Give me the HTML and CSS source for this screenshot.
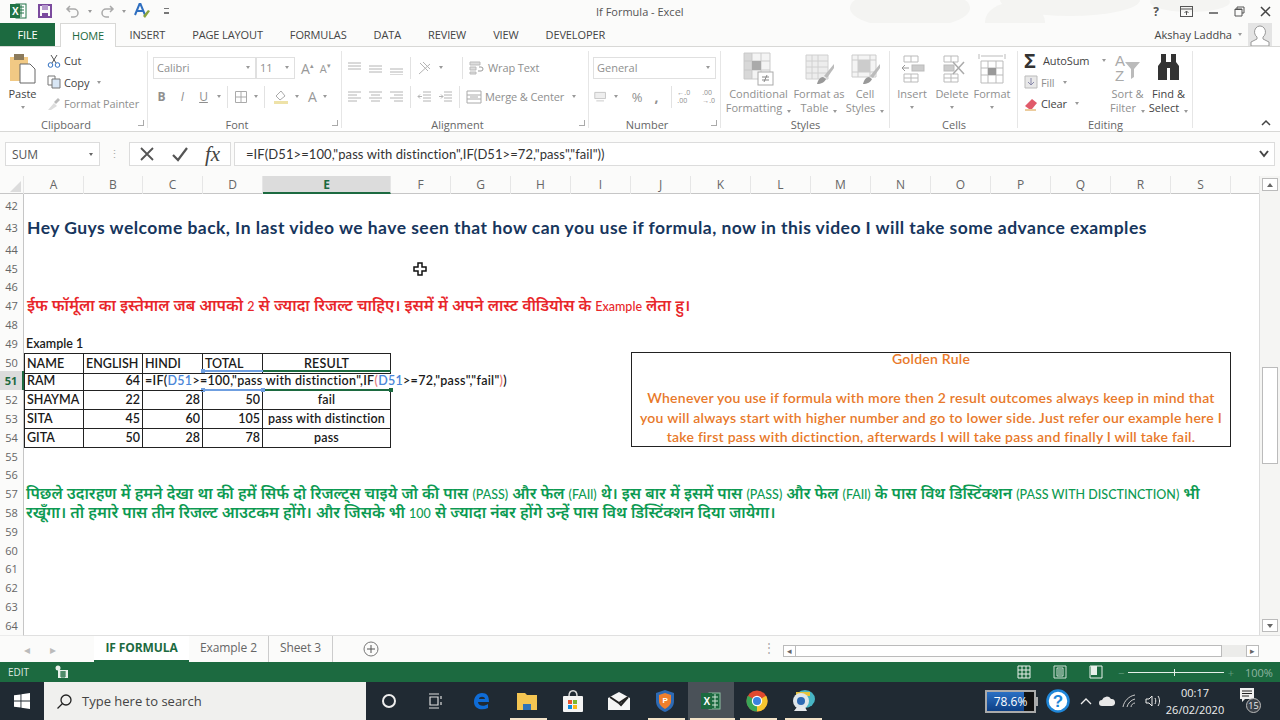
FILE: index.html
```html
<!DOCTYPE html>
<html lang="en">
<head>
  <meta charset="UTF-8" />
  <title>If Formula - Excel</title>
  <link rel="stylesheet" href="styles.css">
</head>
<body>
  <div class="titlebar">
    <svg class="clouds" width="480" height="46" viewBox="0 0 480 46"><g fill="#f4f4f2"><ellipse cx="110" cy="8" rx="60" ry="20"/><ellipse cx="215" cy="22" rx="30" ry="20"/><ellipse cx="270" cy="0" rx="70" ry="16"/><ellipse cx="370" cy="38" rx="70" ry="10"/><ellipse cx="390" cy="2" rx="40" ry="10"/></g></svg>
    <div class="qat">
      <svg width="18" height="18" viewBox="0 0 18 18"><rect x="7" y="2" width="10" height="14" fill="#fff" stroke="#217346"/><path d="M10 5h5M10 8h5M10 11h5M12 3v12" stroke="#217346"/><rect x="1" y="2" width="10" height="14" fill="#217346"/><text x="3" y="13" class="xmark">X</text></svg>
      <svg width="16" height="16" viewBox="0 0 16 16"><path d="M2 2h12v12H2z" fill="none" stroke="#7b4a9e" stroke-width="2"/><rect x="5" y="2" width="6" height="5" fill="#b79bce"/><rect x="5" y="10" width="6" height="4" fill="#7b4a9e"/></svg>
      <svg width="16" height="14" viewBox="0 0 16 14"><path d="M5 2 2 5l3 3M2 5h7a4 4 0 0 1 0 8H6" fill="none" stroke="#aaa" stroke-width="1.5"/></svg>
      <span class="caret"></span>
      <svg width="16" height="14" viewBox="0 0 16 14"><path d="m11 2 3 3-3 3M14 5H7a4 4 0 0 0 0 8h3" fill="none" stroke="#aaa" stroke-width="1.5"/></svg>
      <span class="caret"></span>
      <svg width="18" height="18" viewBox="0 0 18 18"><path d="M2 13 6.500 2h1L12 13M4 9h6" fill="none" stroke="#2f6fc0" stroke-width="2"/><path d="m10 14 5-6 2 1-5 7z" fill="#8aa33c"/></svg>
      <span class="qat-more"></span>
    </div>
    <div class="doc-title">If Formula - Excel</div>
    <div class="win-btns">
      <span class="win-help">?</span>
      <svg width="13" height="11" viewBox="0 0 13 11"><rect x=".5" y=".5" width="12" height="10" fill="none" stroke="#555"/><path d="M.5 3h12M6.500 9V5M4.500 7l2-2 2 2" fill="none" stroke="#555"/></svg>
      <svg width="11" height="11" viewBox="0 0 11 11"><path d="M1 7h9" stroke="#555" stroke-width="1.500"/></svg>
      <svg width="11" height="11" viewBox="0 0 11 11"><path d="M3 3V1h7v6H8M1 3h7v7H1z" fill="none" stroke="#555"/><path d="M1 3.500h7" stroke="#555"/></svg>
      <svg width="11" height="11" viewBox="0 0 11 11"><path d="m1 1 9 9M10 1l-9 9" stroke="#444" stroke-width="1.500"/></svg>
    </div>
  </div>

  <div class="tabsbar">
    <div class="tab file">FILE</div>
    <div class="tab active">HOME</div>
    <div class="tab">INSERT</div>
    <div class="tab">PAGE LAYOUT</div>
    <div class="tab">FORMULAS</div>
    <div class="tab">DATA</div>
    <div class="tab">REVIEW</div>
    <div class="tab">VIEW</div>
    <div class="tab">DEVELOPER</div>
    <div class="user">
      <span>Akshay Laddha</span><span class="caret"></span>
      <svg width="24" height="23" viewBox="0 0 24 23"><rect width="24" height="23" fill="#e4e4e4"/><path d="M3 23v-4l6-3v-2a5.500 6 0 1 1 6 0v2l6 3v4z" fill="#fff" stroke="#999"/></svg>
    </div>
  </div>

  <div class="ribbon">
    <div class="grp g-clip">
      <div class="grp-body">
        <div class="paste">
          <svg width="27" height="30" viewBox="0 0 27 30"><rect x="1" y="3" width="18" height="24" fill="#f1c984"/><rect x="5" y="0" width="10" height="6" fill="#8b7a5c"/><path d="M11 10h10l5 5v14H11z" fill="#fff" stroke="#666"/></svg>
          <span>Paste</span><span class="caret"></span>
        </div>
        <div class="clip-list">
          <div class="rbtn dark"><svg width="14" height="14" viewBox="0 0 14 14"><path d="m4 1 5 8M10 1 5 9" stroke="#555" fill="none"/><circle cx="3.500" cy="11" r="2.300" fill="none" stroke="#2f6fc0"/><circle cx="10.500" cy="11" r="2.300" fill="none" stroke="#2f6fc0"/></svg>Cut</div>
          <div class="rbtn dark"><svg width="14" height="14" viewBox="0 0 14 14"><path d="M1 1h7v9H1z" fill="#fff" stroke="#777"/><path d="M5 4h8v9H5z" fill="#d8e6f5" stroke="#777"/></svg>Copy<span class="caret gap"></span></div>
          <div class="rbtn"><svg width="14" height="14" viewBox="0 0 14 14"><path d="m1 13 6-7 3 3-6 4z" fill="#ddd"/><path d="m7 5 4-4 2 2-4 4z" fill="#bbb"/></svg>Format Painter</div>
        </div>
      </div>
      <div class="grp-label lbl-launch">Clipboard<i class="launch"></i></div>
    </div>

    <div class="grp g-font">
      <div class="grp-body stack">
        <div class="line">
          <div class="combo font-box">Calibri<span class="caret"></span></div>
          <div class="combo size-box">11<span class="caret"></span></div>
          <span class="glyph big">A<sup>▴</sup></span>
          <span class="glyph small">A<sup>▾</sup></span>
        </div>
        <div class="line fmt">
          <b>B</b><em>I</em><u>U</u><span class="caret"></span>
          <i class="sep"></i>
          <svg width="14" height="14" viewBox="0 0 14 14"><path d="M1.500 1.500h11v11h-11zM7 1.500v11M1.500 7h11" fill="none" stroke="#aaa"/></svg><span class="caret"></span>
          <i class="sep"></i>
          <svg class="fill-ic" width="16" height="15" viewBox="0 0 16 15"><path d="m3 7 5-5 4 5-5 4z" fill="none" stroke="#aaa"/><rect x="1" y="12" width="14" height="3" fill="#eee2a8"/></svg><span class="caret"></span>
          <span class="glyph a-ic">A</span><span class="caret"></span>
        </div>
      </div>
      <div class="grp-label lbl-launch">Font<i class="launch"></i></div>
    </div>

    <div class="grp g-align">
      <div class="grp-body stack">
        <div class="line">
          <svg class="al" width="15" height="14" viewBox="0 0 15 14"><path d="M1 2h13M1 5h13M1 8h13" stroke="#b4b4b4"/></svg>
          <svg class="al" width="15" height="14" viewBox="0 0 15 14"><path d="M1 5h13M1 8h13M1 11h13" stroke="#b4b4b4"/></svg>
          <svg class="al" width="15" height="14" viewBox="0 0 15 14"><path d="M1 8h13M1 11h13M1 14h13" stroke="#b4b4b4"/></svg>
          <i class="sep"></i>
          <svg width="16" height="14" viewBox="0 0 16 14"><path d="m3 2 8 8M6 1l7 7M2 13 13 3" stroke="#b4b4b4" fill="none"/></svg><span class="caret"></span>
          <i class="sep wide"></i>
          <div class="rbtn"><svg width="16" height="14" viewBox="0 0 16 14"><path d="M1 1h10v3H1zM1 6h6v3H1zM1 11h6v2H1z" fill="#ddd" stroke="#bbb"/><path d="M9 10h3a2 2 0 0 0 0-4h-2" fill="none" stroke="#999"/></svg>Wrap Text</div>
        </div>
        <div class="line">
          <svg class="al" width="15" height="14" viewBox="0 0 15 14"><path d="M1 2h13M1 5h9M1 8h13M1 11h9" stroke="#b4b4b4"/></svg>
          <svg class="al" width="15" height="14" viewBox="0 0 15 14"><path d="M1 2h13M3 5h9M1 8h13M3 11h9" stroke="#b4b4b4"/></svg>
          <svg class="al" width="15" height="14" viewBox="0 0 15 14"><path d="M1 2h13M5 5h9M1 8h13M5 11h9" stroke="#b4b4b4"/></svg>
          <i class="sep"></i>
          <svg width="15" height="14" viewBox="0 0 15 14"><path d="M6 2h8M6 5h8M6 8h8M6 11h8M1 6.500h4M3 4.500l-2 2 2 2" stroke="#b4b4b4" fill="none"/></svg>
          <svg width="15" height="14" viewBox="0 0 15 14"><path d="M6 2h8M6 5h8M6 8h8M6 11h8M1 6.500h4M3 4.500l2 2-2 2" stroke="#b4b4b4" fill="none"/></svg>
          <i class="sep"></i>
          <div class="rbtn"><svg width="16" height="14" viewBox="0 0 16 14"><path d="M1 1h14v12H1zM1 5h14M1 9h14M4 7h8" fill="none" stroke="#aaa"/></svg>Merge &amp; Center<span class="caret gap"></span></div>
        </div>
      </div>
      <div class="grp-label lbl-launch">Alignment<i class="launch"></i></div>
    </div>

    <div class="grp g-num">
      <div class="grp-body stack">
        <div class="line"><div class="combo num-box">General<span class="caret"></span></div></div>
        <div class="line numfmt">
          <svg width="18" height="14" viewBox="0 0 18 14"><path d="M1 1h14v8H1z" fill="#eee" stroke="#bbb"/><path d="M3 11h10v2H3z" fill="#ddd"/></svg><span class="caret"></span>
          <span class="pct">%</span><span class="comma">,</span>
          <i class="sep"></i>
          <span class="dec">←.0<br>.00</span><span class="dec">.00<br>→.0</span>
        </div>
      </div>
      <div class="grp-label lbl-launch">Number<i class="launch"></i></div>
    </div>

    <div class="grp g-styles">
      <div class="grp-body bigs">
        <div class="big-btn w1">
          <svg width="32" height="34" viewBox="0 0 32 34"><path d="M1 1h26v26H1zM1 9h26M1 18h26M9 1v26M18 1v26" fill="#f4f4f4" stroke="#ccc"/><path d="M9 9h9v9H9z" fill="#aaa"/><path d="M1 1h8v26H1z" fill="#c4c4c4" opacity=".6"/><rect x="15" y="20" width="15" height="13" fill="#fff" stroke="#aaa"/><path d="M19 25h7M19 28h7M24 23l-3 7" stroke="#888"/></svg>
          <span>Conditional</span><span>Formatting<span class="caret gap"></span></span>
        </div>
        <div class="big-btn w2">
          <svg width="32" height="34" viewBox="0 0 32 34"><path d="M3 3h22v24H3zM3 9h22M3 15h22M3 21h22M9 3v24M15 3v24" fill="#ededed" stroke="#d0d0d0"/><path d="m31 12-10 12 3 2 7-10z" fill="#bbb"/><path d="M20 25c-3 0-5 3-6 7 4 0 8-2 9-5z" fill="#999"/></svg>
          <span>Format as</span><span>Table<span class="caret gap"></span></span>
        </div>
        <div class="big-btn w3">
          <svg width="32" height="34" viewBox="0 0 32 34"><path d="M3 3h24v22H3zM3 8h24M9 3v22M21 3v22M3 20h24" fill="#f4f4f4" stroke="#ccc"/><path d="M9 8h12v12H9z" fill="#ccc"/><path d="m31 12-10 12 3 2 7-10z" fill="#bbb"/><path d="M20 25c-3 0-5 3-6 7 4 0 8-2 9-5z" fill="#999"/></svg>
          <span>Cell</span><span>Styles<span class="caret gap"></span></span>
        </div>
      </div>
      <div class="grp-label">Styles</div>
    </div>

    <div class="grp g-cells">
      <div class="grp-body bigs">
        <div class="big-btn w4">
          <svg width="28" height="34" viewBox="0 0 28 34"><path d="M6 4h14v6H6zM6 22h14v8H6zM13 4v6M13 22v8M6 26h14" fill="none" stroke="#bbb"/><rect x="14" y="13" width="12" height="6" fill="#ccc" stroke="#bbb"/><path d="M4 16h7M7 13l-3 3 3 3" fill="none" stroke="#999"/></svg>
          <span>Insert</span><span class="caret"></span>
        </div>
        <div class="big-btn w4">
          <svg width="28" height="34" viewBox="0 0 28 34"><path d="M6 4h14v6H6zM6 22h14v8H6zM13 4v6M13 22v8M6 26h14" fill="none" stroke="#bbb"/><rect x="6" y="13" width="10" height="6" fill="#ccc" stroke="#bbb"/><path d="m15 10 11 12M26 10 15 22" stroke="#aaa" stroke-width="1.500"/></svg>
          <span>Delete</span><span class="caret"></span>
        </div>
        <div class="big-btn w4">
          <svg width="28" height="34" viewBox="0 0 28 34"><path d="M1 2v5M27 2v5M3 4h22M3 9h22v22H3zM3 16h22M3 23h22M10 9v22M18 9v22" fill="none" stroke="#bbb"/><rect x="10" y="16" width="8" height="7" fill="#999"/></svg>
          <span>Format</span><span class="caret"></span>
        </div>
      </div>
      <div class="grp-label">Cells</div>
    </div>

    <div class="grp g-edit">
      <div class="grp-body">
        <div class="clip-list edit-list">
          <div class="rbtn dark"><span class="sigma">Σ</span>AutoSum<span class="caret gap2"></span></div>
          <div class="rbtn"><svg width="14" height="14" viewBox="0 0 14 14"><path d="M1 1h12v12H1z" fill="#e8e8e8" stroke="#bbb"/><path d="M7 3v7M4 7l3 3 3-3" fill="none" stroke="#88a"/></svg>Fill<span class="caret gap"></span></div>
          <div class="rbtn dark"><svg width="14" height="14" viewBox="0 0 14 14"><path d="m1 9 7-7 5 4-5 6H5z" fill="#e05a6a"/><path d="M1 13h11" stroke="#d99a3c"/></svg>Clear<span class="caret gap"></span></div>
        </div>
        <div class="big-btn w5">
          <svg width="32" height="34" viewBox="0 0 32 34"><text x="3" y="14" class="sort-l">A</text><text x="3" y="29" class="sort-l">Z</text><path d="M13 10h15l-6 7v8l-3 2V17z" fill="#bbb"/></svg>
          <span>Sort &amp;</span><span>Filter<span class="caret gap"></span></span>
        </div>
        <div class="big-btn w5 dark">
          <svg width="32" height="34" viewBox="0 0 32 34"><path d="M8 2h5v8h5V2h5v8l3 4v14h-9V16h-3v12H5V14l3-4z" fill="#333"/></svg>
          <span>Find &amp;</span><span>Select<span class="caret gap"></span></span>
        </div>
      </div>
      <div class="grp-label">Editing</div>
    </div>
    <svg class="collapse" width="10" height="7" viewBox="0 0 10 7"><path d="m1 6 4-4 4 4" fill="none" stroke="#444" stroke-width="1.500"/></svg>
  </div>

  <div class="formulabar">
    <div class="namebox">SUM<span class="caret dark-caret"></span></div>
    <span class="dots">⋮</span>
    <div class="fx-box">
      <svg width="16" height="16" viewBox="0 0 16 16"><path d="m2 2 12 12M14 2 2 14" stroke="#555" stroke-width="1.800"/></svg>
      <svg width="18" height="16" viewBox="0 0 18 16"><path d="m2 9 5 5L16 2" fill="none" stroke="#555" stroke-width="2.200"/></svg>
      <span class="fx">fx</span>
    </div>
    <div class="formula">=IF(D51&gt;=100,"pass with distinction",IF(D51&gt;=72,"pass","fail"))
      <svg width="10" height="8" viewBox="0 0 10 8"><path d="m1 1 4 5 4-5" fill="none" stroke="#444" stroke-width="2"/></svg>
    </div>
  </div>

  <div class="grid-wrap">
    <div class="sheet-area">
      <div class="col-heads">
        <div class="corner"><i></i></div>
        <div>A</div><div>B</div><div>C</div><div>D</div><div class="sel">E</div><div>F</div><div>G</div><div>H</div><div>I</div><div>J</div><div>K</div><div>L</div><div>M</div><div>N</div><div>O</div><div>P</div><div>Q</div><div>R</div><div>S</div><div></div>
      </div>
      <div class="sheet">
        <div class="row h42"><div class="num">42</div></div>
        <div class="row h43"><div class="num">43</div><div class="long hello">Hey Guys welcome back, In last video we have seen that how can you use if formula, now in this video I will take some advance examples</div></div>
        <div class="row"><div class="num">44</div></div>
        <div class="row"><div class="num">45</div></div>
        <div class="row"><div class="num">46</div></div>
        <div class="row"><div class="num">47</div><div class="long hindi red">ईफ फॉर्मूला का इस्तेमाल जब आपको <small>2</small> से ज्यादा रिजल्ट चाहिए। इसमें में अपने लास्ट वीडियोस के <small>Example</small> लेता हु।</div></div>
        <div class="row"><div class="num">48</div></div>
        <div class="row"><div class="num">49</div><div class="long ex">Example 1</div></div>
        <div class="row tbl first"><div class="num">50</div><div>NAME</div><div>ENGLISH</div><div>HINDI</div><div>TOTAL</div><div class="c">RESULT</div></div>
        <div class="row tbl"><div class="num on">51</div><div>RAM</div><div class="r">64</div><div class="editing">=IF(<span class="ref">D51</span>&gt;=100,"pass with distinction",IF<span class="paren">(</span><span class="ref">D51</span>&gt;=72,"pass","fail"<span class="paren">)</span>)</div><div class="ref-cell"></div><div class="cur-cell"></div></div>
        <div class="row tbl"><div class="num">52</div><div>SHAYMA</div><div class="r">22</div><div class="r">28</div><div class="r">50</div><div class="c">fail</div></div>
        <div class="row tbl"><div class="num">53</div><div>SITA</div><div class="r">45</div><div class="r">60</div><div class="r">105</div><div class="c">pass with distinction</div></div>
        <div class="row tbl"><div class="num">54</div><div>GITA</div><div class="r">50</div><div class="r">28</div><div class="r">78</div><div class="c">pass</div></div>
        <div class="row"><div class="num">55</div></div>
        <div class="row"><div class="num">56</div></div>
        <div class="row"><div class="num">57</div><div class="long hindi green">पिछले उदारहण में हमने देखा था की हमें सिर्फ दो रिजल्ट्स चाइये जो की पास <small>(PASS)</small> और फेल <small>(FAIl)</small> थे। इस बार में इसमें पास <small>(PASS)</small> और फेल <small>(FAIl)</small> के पास विथ डिस्टिंक्शन <small>(PASS WITH DISCTINCTION)</small> भी</div></div>
        <div class="row"><div class="num">58</div><div class="long hindi green">रखूँगा।  तो हमारे पास तीन रिजल्ट आउटकम होंगे। और जिसके भी <small>100</small> से ज्यादा नंबर होंगे उन्हें पास विथ डिस्टिंक्शन दिया जायेगा।</div></div>
        <div class="row"><div class="num">59</div></div>
        <div class="row"><div class="num">60</div></div>
        <div class="row"><div class="num">61</div></div>
        <div class="row"><div class="num">62</div></div>
        <div class="row"><div class="num">63</div></div>
        <div class="row"><div class="num">64</div></div>

        <div class="golden">
          <div class="golden-head">Golden Rule</div>
          <div>&nbsp;</div>
          <div>Whenever you use if formula with more then 2 result outcomes always keep in mind that</div>
          <div>you will always start with higher number and go to lower side. Just refer our example here I</div>
          <div>take first pass with dictinction, afterwards I will take pass and finally I will take fail.</div>
        </div>
        <svg class="cursor" width="14" height="14" viewBox="0 0 14 14"><path d="M5 1h4v4h4v4H9v4H5V9H1V5h4z" fill="#fff" stroke="#111" stroke-width="1.500"/></svg>
      </div>
    </div>
    <div class="vscroll">
      <div class="arrow-box"><svg width="8" height="6" viewBox="0 0 8 6"><path d="m4 1 3 4H1z" fill="#666"/></svg></div>
      <div class="vthumb"></div>
      <div class="arrow-box"><svg width="8" height="6" viewBox="0 0 8 6"><path d="m4 5 3-4H1z" fill="#666"/></svg></div>
    </div>
  </div>

  <div class="sheetbar">
    <div class="nav"><span>◂</span><span>▸</span></div>
    <div class="stab on">IF FORMULA</div>
    <div class="stab">Example 2</div>
    <div class="stab">Sheet 3</div>
    <svg class="add" width="16" height="16" viewBox="0 0 16 16"><circle cx="8" cy="8" r="7" fill="none" stroke="#777"/><path d="M8 4v8M4 8h8" stroke="#555"/></svg>
    <span class="dots hd">⋮</span>
    <div class="hscroll">
      <div class="harrow">◂</div>
      <div class="hthumb"></div>
      <div class="harrow end">▸</div>
    </div>
  </div>

  <div class="statusbar">
    <span class="mode">EDIT</span>
    <svg width="14" height="14" viewBox="0 0 14 14"><circle cx="3" cy="3" r="2.500" fill="#e8f0ea"/><path d="M3 5h10v8H3z" fill="#e8f0ea"/><path d="M5 7h6M5 9h6M5 11h6M7 6v7M9 6v7" stroke="#1c6a40"/></svg>
    <div class="views">
      <svg width="14" height="14" viewBox="0 0 14 14"><path d="M1 1h12v12H1zM5 1v12M9 1v12M1 5h12M1 9h12" fill="none" stroke="#e8f0ea"/></svg>
      <svg width="14" height="14" viewBox="0 0 14 14"><path d="M1 1h12v12H1zM4 3h6v8H4zM5 5h4M5 7h4M5 9h4" fill="none" stroke="#cfe0d6"/></svg>
      <svg width="14" height="14" viewBox="0 0 14 14"><path d="M1 1h12v12H1z" fill="none" stroke="#e8f0ea"/><path d="M2 1h6v9H2z" fill="#e8f0ea"/></svg>
    </div>
    <div class="zoomer"><span class="zm">−</span><div class="slider"><i></i></div><span class="zm">+</span></div>
    <span class="pctz">100%</span>
  </div>

  <div class="taskbar">
    <svg class="start" width="16" height="16" viewBox="0 0 16 16"><path d="M0 2.300 6.500 1.400v6.100H0zM7.400 1.300 16 0v7.500H7.400zM0 8.500h6.500v6.100L0 13.700zM7.400 8.500H16V16l-8.600-1.300z" fill="#fff"/></svg>
    <div class="searchbox">
      <svg width="17" height="17" viewBox="0 0 17 17"><circle cx="10" cy="7" r="5" fill="none" stroke="#222" stroke-width="1.300"/><path d="M6.500 10.500 1.500 15.500" stroke="#222" stroke-width="1.300"/></svg>
      <span>Type here to search</span>
    </div>
    <div class="apps">
      <div class="app"><svg width="16" height="16" viewBox="0 0 16 16"><circle cx="8" cy="8" r="6" fill="none" stroke="#eee" stroke-width="2"/></svg></div>
      <div class="app"><svg width="16" height="16" viewBox="0 0 16 16"><path d="M2 1h10M2 15h10M3 4h8v8H3zM14 3v3M14 9v3" fill="none" stroke="#ddd" stroke-width="1.200"/></svg></div>
      <div class="app"><svg width="20" height="20" viewBox="0 0 20 20"><path d="M3 11c0-5 3-9 8-9s7 3 7 9H7c0 4 6 5 10 2v4c-6 3-14 1-14-6zm5-3h6c0-3-6-3-6 0z" fill="#0f6cd6"/></svg></div>
      <div class="app"><svg width="20" height="18" viewBox="0 0 20 18"><path d="M0 1h8l2 2h10v15H0z" fill="#f4c552"/><rect x="6" y="12" width="8" height="6" fill="#2f72b8"/></svg></div>
      <div class="app"><svg width="20" height="22" viewBox="0 0 20 22"><rect x="0" y="6" width="20" height="16" rx="1" fill="#f4f4f4"/><path d="M6 6c0-7 8-7 8 0" fill="none" stroke="#ddd" stroke-width="1.500"/><rect x="5" y="10" width="4" height="4" fill="#e8542e"/><rect x="10" y="10" width="4" height="4" fill="#7cb82f"/><rect x="5" y="15" width="4" height="4" fill="#0f8adf"/><rect x="10" y="15" width="4" height="4" fill="#fbb917"/></svg></div>
      <div class="app"><svg width="22" height="18" viewBox="0 0 22 18"><path d="M0 6 11 0l11 6v12H0z" fill="#f5f5f5"/><path d="m2 5 9 6 9-6-7 8-2-2" fill="none" stroke="#222" stroke-width="2"/></svg></div>
      <div class="app"><svg width="18" height="22" viewBox="0 0 18 22"><path d="M9 0l9 3v8c0 6-4 9-9 11-5-2-9-5-9-11V3z" fill="#2d6ab4"/><path d="M9 3l6 2v6c0 4-3 6-6 8-3-2-6-4-6-8V5z" fill="#ef7f2d"/><text x="6.500" y="13" class="shield-p">P</text></svg></div>
      <div class="app cur"><svg width="20" height="18" viewBox="0 0 20 18"><rect x="8" y="1" width="11" height="16" fill="#1c6a40" stroke="#8fc1a3"/><path d="M11 5h6M11 9h6M11 13h6M14 2v14" stroke="#cfe4d7"/><rect x="0" y="1" width="11" height="16" fill="#1c6a40"/><text x="2.500" y="13" class="xmark">X</text></svg></div>
      <div class="app"><svg width="22" height="22" viewBox="0 0 22 22"><circle cx="11" cy="11" r="10.500" fill="#e0492f"/><path d="M11 11 20.100 5.700A10.500 10.500 0 0 1 11 21.500z" fill="#f7c62f"/><path d="M11 11 11 21.500A10.500 10.500 0 0 1 1.900 5.700z" fill="#3aa657"/><circle cx="11" cy="11" r="5.200" fill="#fff"/><circle cx="11" cy="11" r="4" fill="#3b82e0"/></svg></div>
      <div class="app"><svg width="24" height="24" viewBox="0 0 24 24"><ellipse cx="14" cy="10" rx="10" ry="9" fill="#47b5c4"/><path d="M5 3h14v4H5z" fill="#e6c23a"/><circle cx="10" cy="12" r="8" fill="#dfe6ea"/><circle cx="10" cy="12" r="4" fill="#2d6ab4"/><path d="M3 22h13l-2-4H6z" fill="#e6e9ec"/></svg></div>
    </div>
    <div class="tray">
      <div class="battery"><div class="batt-fill"></div><span>78.6%</span></div>
      <svg class="help-ic" width="24" height="24" viewBox="0 0 24 24"><circle cx="12" cy="12" r="10.500" fill="#fff" stroke="#1f86d8" stroke-width="2.500"/><text x="12" y="18" text-anchor="middle" class="help-q">?</text></svg>
      <svg width="12" height="8" viewBox="0 0 12 8"><path d="m1 7 5-5 5 5" fill="none" stroke="#eee" stroke-width="1.300"/></svg>
      <svg width="16" height="10" viewBox="0 0 16 10"><path d="M3 10a3 3 0 0 1 0-6 5 5 0 0 1 9-1 3.500 3.500 0 0 1 1 7z" fill="#e8e8e8"/></svg>
      <svg width="16" height="14" viewBox="0 0 16 14"><path d="M1 13C2 7 7 2 13 1M5 13c1-4 4-7 8-8M9 13c0-2 2-4 4-4" fill="none" stroke="#ccc"/></svg>
      <svg width="16" height="14" viewBox="0 0 16 14"><path d="M1 5h3l3-3v10L4 9H1z" fill="none" stroke="#eee"/><path d="M10 4c1 2 1 4 0 6M13 2c2 3 2 7 0 10" fill="none" stroke="#eee"/></svg>
      <div class="clock"><span>00:17</span><span>26/02/2020</span></div>
      <div class="notif">
        <svg width="16" height="16" viewBox="0 0 16 16"><path d="M1 1h14v11H6l-3 3v-3H1z" fill="#f0f0f0"/><path d="M3 4h10M3 6.500h10M3 9h7" stroke="#222"/></svg>
        <span class="badge">15</span>
      </div>
    </div>
    <div class="marks"><i class="m1"></i><i class="m2"></i><i class="m3"></i><i class="m4"></i><i class="m5"></i></div>
  </div>
</body>
</html>
```

FILE: styles.css
```css
* {
  box-sizing: border-box;
}
html, body {
  margin: 0;
  height: 100%;
}
body {
  width: 1280px;
  height: 720px;
  overflow: hidden;
  display: flex;
  flex-direction: column;
  font-family: "Open Sans", "Noto Sans", sans-serif;
  font-size: 11px;
  color: #8f8f8f;
  background: #fff;
}
.caret {
  display: inline-block;
  width: 0;
  height: 0;
  border-left: 2.5px solid transparent;
  border-right: 2.5px solid transparent;
  border-top: 3px solid #999;
  vertical-align: middle;
}
.caret.gap { margin-left: 5px; }
.caret.gap2 { margin-left: 10px; }
.xmark {
  font: bold 10px "Liberation Sans", sans-serif;
  fill: #fff;
}

/* title bar */
.titlebar {
  height: 23px;
  display: flex;
  align-items: center;
  position: relative;
  background: #fbfbfa;
  color: #555;
}
.clouds {
  position: absolute;
  right: 0;
  top: 0;
}
.qat {
  width: 500px;
  padding-left: 9px;
  display: flex;
  align-items: center;
  gap: 7px;
  position: relative;
}
.qat svg:nth-child(2) { margin-left: 3px; margin-right: 5px; }
.qat-more {
  width: 5px;
  height: 6px;
  margin-left: 6px;
  border-top: 1px solid #777;
  border-bottom: 2px solid #777;
}
.doc-title {
  position: relative;
  width: 280px;
  padding-left: 96px;
  font-size: 11px;
  white-space: nowrap;
}
.win-btns {
  position: relative;
  margin-left: auto;
  display: flex;
  align-items: center;
  gap: 15px;
  padding-right: 9px;
}
.win-help {
  font-weight: 700;
  font-size: 12px;
  color: #555;
  margin-right: 6px;
}

/* ribbon tabs */
.tabsbar {
  height: 24px;
  display: flex;
  align-items: stretch;
  position: relative;
  background: #fbfbfa;
  border-bottom: 1px solid #d8d8d6;
  color: #444;
}
.tab {
  padding: 4px 13.5px 0;
  font-size: 11px;
  letter-spacing: -.12px;
  white-space: nowrap;
}
.tab.file {
  width: 55px;
  margin-right: 5px;
  padding: 4px 0 0;
  text-align: center;
  background: #1c6a40;
  color: #fff;
}
.tab.active {
  width: 56px;
  padding: 4px 0 0;
  text-align: center;
  margin-bottom: -1px;
  background: #fff;
  color: #1c6a40;
  border: 1px solid #d8d8d6;
  border-bottom: 0;
}
.user {
  margin-left: auto;
  display: flex;
  align-items: center;
  gap: 6px;
  padding-right: 8px;
  position: relative;
}

/* ribbon */
.ribbon {
  height: 87px;
  display: flex;
  position: relative;
  background: #fff;
  border-bottom: 1px solid #d8d8d6;
}
.grp {
  display: flex;
  flex-direction: column;
  position: relative;
  padding-top: 5px;
}
.grp::after {
  content: "";
  position: absolute;
  right: 0;
  top: 4px;
  bottom: 3px;
  width: 1px;
  background: #e6e6e6;
}
.grp-body {
  flex: 1;
  min-height: 0;
  display: flex;
}
.grp-label {
  height: 16px;
  line-height: 20px;
  text-align: center;
  color: #666;
  position: relative;
}
.lbl-launch { padding-right: 16px; }
.launch {
  position: absolute;
  right: 4px;
  top: 5px;
  width: 6px;
  height: 6px;
  border-left: 1px solid #aaa;
  border-top: 1px solid #aaa;
  transform: rotate(180deg);
}
.g-clip { width: 148px; }
.g-font { width: 194px; }
.g-align { width: 247px; }
.g-num { width: 132px; }
.g-styles { width: 169px; }
.g-cells { width: 128px; }
.g-edit { width: 175px; }
.paste {
  width: 47px;
  display: flex;
  flex-direction: column;
  align-items: center;
  color: #444;
  line-height: 14px;
  padding: 2px 2px 0 0;
}
.paste svg { margin-bottom: 3px; }
.paste .caret { margin-top: 5px; }
.clip-list {
  display: flex;
  flex-direction: column;
  gap: 3.500px;
}
.rbtn {
  display: flex;
  align-items: center;
  gap: 3px;
  height: 18px;
  letter-spacing: -.12px;
  white-space: nowrap;
}
.dark { color: #444; }
.stack {
  flex-direction: column;
  gap: 7px;
  padding: 5px 0 0 5px;
}
.line {
  height: 22px;
  display: flex;
  align-items: center;
  gap: 6px;
}
.combo {
  height: 22px;
  padding: 0 5px 0 3px;
  display: flex;
  align-items: center;
  justify-content: space-between;
  border: 1px solid #e0e0e0;
}
.font-box { width: 103px; }
.size-box { width: 39px; margin-left: -6px; }
.num-box { width: 123px; margin-left: -1px; }
.glyph {
  font-size: 14px;
  line-height: 14px;
  color: #999;
}
.glyph sup { font-size: 7px; }
.glyph.small { font-size: 11px; }
.fmt { padding-left: 1px; }
.fmt b, .fmt em, .fmt u {
  width: 15px;
  text-align: center;
  font-size: 12px;
}
.fill-ic { margin-left: 2px; }
.a-ic { margin-left: 3px; }
.sep {
  width: 1px;
  height: 22px;
  background: #e2e2e2;
}
.sep.wide { margin-left: 13px; }
.numfmt .pct { font-size: 13px; margin-left: 8px; }
.numfmt .comma { font-size: 14px; margin: 0 6px; font-weight: 700; }
.dec {
  font-size: 7px;
  line-height: 8px;
  margin-right: 6px;
}
.big-btn {
  display: flex;
  flex-direction: column;
  align-items: center;
  line-height: 14px;
  white-space: nowrap;
}
.big-btn svg { margin-bottom: 1px; }
.big-btn .caret { margin-top: 5px; }
.w1 { width: 75px; }
.w2 { width: 46px; }
.w3 { width: 46px; }
.w4 { width: 40px; }
.w5 { width: 41px; }
.g-cells .bigs { padding-left: 2px; }
.g-edit .edit-list { width: 89px; padding: 0 0 0 6px; }
.sigma {
  font-size: 20px;
  width: 16px;
  line-height: 16px;
  color: #333;
  font-weight: 700;
}
.sort-l {
  font: 15px "Liberation Sans", sans-serif;
  fill: #aaa;
}
.collapse {
  position: absolute;
  right: 9px;
  bottom: 5px;
}

/* formula bar */
.formulabar {
  height: 44px;
  padding: 10px 5px 10px;
  display: flex;
  align-items: stretch;
  background: #fbfbfa;
  color: #555;
}
.namebox {
  width: 95px;
  padding: 0 6px;
  display: flex;
  align-items: center;
  justify-content: space-between;
  background: #fff;
  border: 1px solid #dcdcdc;
  font-size: 12px;
}
.dark-caret { border-top-color: #666; }
.dots {
  width: 29px;
  text-align: center;
  line-height: 24px;
  color: #aaa;
}
.fx-box {
  width: 102px;
  display: flex;
  align-items: center;
  gap: 16px;
  padding-left: 9px;
  background: #fff;
  border: 1px solid #dcdcdc;
}
.fx {
  font: italic 21px "Liberation Serif", serif;
  color: #444;
  line-height: 20px;
}
.formula {
  flex: 1;
  margin-left: 3px;
  padding: 0 5px 0 11px;
  display: flex;
  align-items: center;
  justify-content: space-between;
  background: #fff;
  border: 1px solid #dcdcdc;
  color: #333;
  font-family: Lato, sans-serif;
  font-size: 13px;
  letter-spacing: .08px;
}

/* sheet */
.grid-wrap {
  height: 459px;
  display: flex;
  background: #fbfbfa;
}
.sheet-area {
  width: 1260px;
}
.col-heads {
  height: 18px;
  display: grid;
  grid-template-columns: 24px 60px 59px 60px 60px 128px repeat(14, 60px) 1fr;
  background: #fbfbfa;
  border-bottom: 1px solid #c6c6c6;
  color: #666;
}
.col-heads div {
  text-align: center;
  line-height: 17px;
  border-right: 1px solid #e6e6e6;
  font-size: 12px;
}
.corner {
  position: relative;
}
.corner i {
  position: absolute;
  right: 2px;
  bottom: 2px;
  border-left: 11px solid transparent;
  border-bottom: 11px solid #dcdcdc;
}
.col-heads .sel {
  background: #dcdcdc;
  color: #1c6a40;
  font-weight: 700;
  border-bottom: 2px solid #1c6a40;
  height: 18px;
}
.sheet {
  position: relative;
  height: 441px;
  background: #fff;
  font-family: Lato, sans-serif;
  font-size: 12.500px;
  color: #1a1a1a;
  border-right: 1px solid #dcdcdc;
}
.row {
  height: 18.800px;
  display: grid;
  grid-template-columns: 24px 60px 59px 60px 60px 128px 1fr;
  line-height: 19px;
  white-space: nowrap;
}
.h42 { height: 21px; }
.h42 .num { padding-top: 2px; }
.h43 { height: 24.500px; line-height: 25px; }
.num {
  text-align: center;
  color: #666;
  font-family: "Open Sans", sans-serif;
  font-size: 11px;
  background: #fbfbfa;
  border-right: 1px solid #c6c6c6;
  border-bottom: 1px solid #ececec;
}
.num.on {
  background: #dcdcdc;
  color: #1c6a40;
  font-weight: 700;
  border-right: 2px solid #1c6a40;
}
.long {
  grid-column: 2 / -1;
  padding-left: 3px;
}
.hello {
  font-size: 17.500px;
  letter-spacing: .46px;
  font-weight: 700;
  color: #17365d;
}
.hindi {
  font-family: "Noto Sans", "Noto Sans Devanagari", Lato, sans-serif;
  font-weight: 600;
  font-size: 15.750px;
}
.hindi small {
  font-family: Lato, sans-serif;
  font-size: 12.500px;
  font-weight: 500;
}
.red { color: #e8262a; }
.green { color: #0d9a52; padding-left: 2px; }
.ex { font-weight: 600; padding-left: 2px; }
.tbl > div:not(.num) {
  border-right: 1px solid #222;
  border-bottom: 1px solid #222;
  padding: 0 2px;
  font-weight: 600;
}
.tbl > div:nth-child(2) { border-left: 1px solid #222; }
.tbl.first > div:not(.num) { border-top: 1px solid #222; }
.r { text-align: right; }
.c { text-align: center; letter-spacing: .2px; }
.tbl > div.editing {
  overflow: visible;
  border-right: 0;
  letter-spacing: .3px;
  z-index: 1;
}
.tbl > div.ref-cell {
  position: relative;
  border-right: 0;
  border-bottom: 2px solid #6f9fe0;
  border-top: 2px solid #6f9fe0;
  margin-top: -1px;
}
.tbl > div.ref-cell::before,
.tbl > div.ref-cell::after {
  content: "";
  position: absolute;
  left: -2px;
  width: 4px;
  height: 4px;
  background: #6f9fe0;
}
.tbl > div.ref-cell::before { top: -3px; }
.tbl > div.ref-cell::after { bottom: -3px; }
.tbl > div.cur-cell {
  position: relative;
  border-right: 0;
  border-top: 2px solid #1c6a40;
  border-bottom: 2px solid #1c6a40;
  margin-top: -1px;
}
.tbl > div.cur-cell::before,
.tbl > div.cur-cell::after {
  content: "";
  position: absolute;
  width: 4px;
  height: 4px;
  bottom: -3px;
}
.tbl > div.cur-cell::before { left: -2px; background: #6f9fe0; }
.tbl > div.cur-cell::after { right: -2px; background: #1c6a40; }
.ref { color: #4a86d8; }
.paren { color: #e8807a; }
.golden {
  position: absolute;
  left: 631px;
  top: 158px;
  width: 600px;
  height: 95px;
  border: 1px solid #222;
  background: #fff;
  color: #e8792a;
  font-weight: 600;
  text-align: center;
  line-height: 19.500px;
  font-size: 14px;
  letter-spacing: .25px;
  white-space: nowrap;
}
.golden-head { margin-top: -4px; }
.cursor {
  position: absolute;
  left: 413px;
  top: 68px;
}

/* scrollbars */
.vscroll {
  width: 20px;
  padding: 2px 2px 3px;
  display: flex;
  flex-direction: column;
  background: #f5f5f3;
}
.arrow-box {
  height: 13px;
  display: flex;
  align-items: center;
  justify-content: center;
  background: #fff;
  border: 1px solid #bbb;
}
.vthumb {
  height: 97px;
  margin: 176px 0 auto;
  background: #fff;
  border: 1px solid #bbb;
}
.sheetbar {
  height: 27px;
  display: flex;
  align-items: stretch;
  background: #fbfbfa;
  border-top: 1px solid #e0e0e0;
  color: #666;
  font-size: 12px;
}
.nav {
  width: 94px;
  padding-left: 24px;
  display: flex;
  gap: 20px;
  align-items: center;
  color: #bbb;
}
.stab {
  height: 26px;
  padding: 0 11px;
  line-height: 23px;
  border-right: 1px solid #ccc;
  margin-bottom: 4px;
  letter-spacing: -.1px;
  white-space: nowrap;
}
.stab.on {
  width: 95px;
  padding: 0;
  text-align: center;
  font-weight: 700;
  color: #1c6a40;
  background: #fff;
  border-right: 0;
  border-bottom: 2px solid #1c6a40;
}
.add {
  align-self: center;
  margin-left: 30px;
}
.hd {
  margin-left: auto;
}
.hscroll {
  width: 476px;
  height: 12px;
  margin: 9px 21px 0 0;
  display: flex;
  background: #ececea;
}
.harrow {
  width: 13px;
  background: #fff;
  border: 1px solid #bbb;
  font-size: 9px;
  line-height: 10px;
  text-align: center;
}
.hthumb {
  width: 426px;
  background: #fff;
  border: 1px solid #bbb;
  border-left: 0;
}
.harrow.end {
  margin-left: auto;
}

/* status bar */
.statusbar {
  height: 20px;
  display: flex;
  align-items: center;
  padding-left: 8px;
  background: #1c6a40;
  color: #dfe9e3;
}
.mode {
  width: 47px;
  font-size: 10px;
}
.views {
  margin-left: auto;
  display: flex;
  gap: 22px;
}
.zoomer {
  width: 116px;
  margin-left: 15px;
  display: flex;
  align-items: center;
  gap: 4px;
  color: #5f9a7a;
}
.slider {
  flex: 1;
  height: 1px;
  background: #e6f0ea;
  position: relative;
}
.slider i {
  position: absolute;
  left: 46px;
  top: -3px;
  width: 1px;
  height: 7px;
  background: #e6f0ea;
}
.pctz {
  width: 35px;
  margin: 0 0 0 11px;
  color: #8fb5a0;
}

/* taskbar */
.taskbar {
  height: 38px;
  display: flex;
  align-items: center;
  position: relative;
  background: #202a33;
  color: #eee;
}
.start {
  margin: 0 14px 0 14px;
}
.searchbox {
  width: 322px;
  height: 38px;
  padding-left: 12px;
  display: flex;
  align-items: center;
  gap: 9px;
  background: #f0f0ee;
  color: #444;
  font-size: 13px;
}
.apps {
  display: flex;
  align-items: center;
}
.app {
  width: 46px;
  height: 38px;
  display: flex;
  align-items: center;
  justify-content: center;
}
.app.cur { background: #4a5158; }
.shield-p {
  font: bold 8px "Liberation Sans", sans-serif;
  fill: #fff;
}
.tray {
  margin-left: auto;
  display: flex;
  align-items: center;
  gap: 7px;
  padding-right: 15px;
}
.battery {
  width: 51px;
  height: 23px;
  margin-right: 3px;
  position: relative;
  background: #111;
  border: 2px solid #aaa;
  color: #fff;
  font-size: 12px;
  line-height: 19px;
  text-align: center;
}
.battery::after {
  content: "";
  position: absolute;
  right: -4px;
  top: 5px;
  width: 2px;
  height: 9px;
  background: #aaa;
}
.batt-fill {
  position: absolute;
  left: 0;
  top: 0;
  bottom: 0;
  width: 79%;
  background: linear-gradient(#2a70c4, #0e3f85);
}
.battery span { position: relative; }
.help-ic { margin-right: 3px; }
.help-q {
  font: bold 17px "Liberation Sans", sans-serif;
  fill: #1f86d8;
}
.clock {
  width: 58px;
  display: flex;
  flex-direction: column;
  align-items: center;
  font-size: 11px;
  line-height: 17px;
  margin-left: -2px;
}
.notif {
  width: 26px;
  height: 28px;
  margin-left: 8px;
  position: relative;
}
.badge {
  position: absolute;
  left: 7px;
  top: 11px;
  width: 15px;
  height: 15px;
  border-radius: 50%;
  background: #3a4047;
  border: 1px solid #bbb;
  font-size: 9px;
  line-height: 13px;
  text-align: center;
}
.marks i {
  position: absolute;
  bottom: 0;
  height: 2px;
  background: #f3e3c8;
}
.m1 { left: 510px; width: 37px; }
.m2 { left: 648px; width: 37px; }
.m3 { left: 690px; width: 45px; }
.m4 { left: 740px; width: 37px; }
.m5 { left: 785px; width: 37px; }
```
